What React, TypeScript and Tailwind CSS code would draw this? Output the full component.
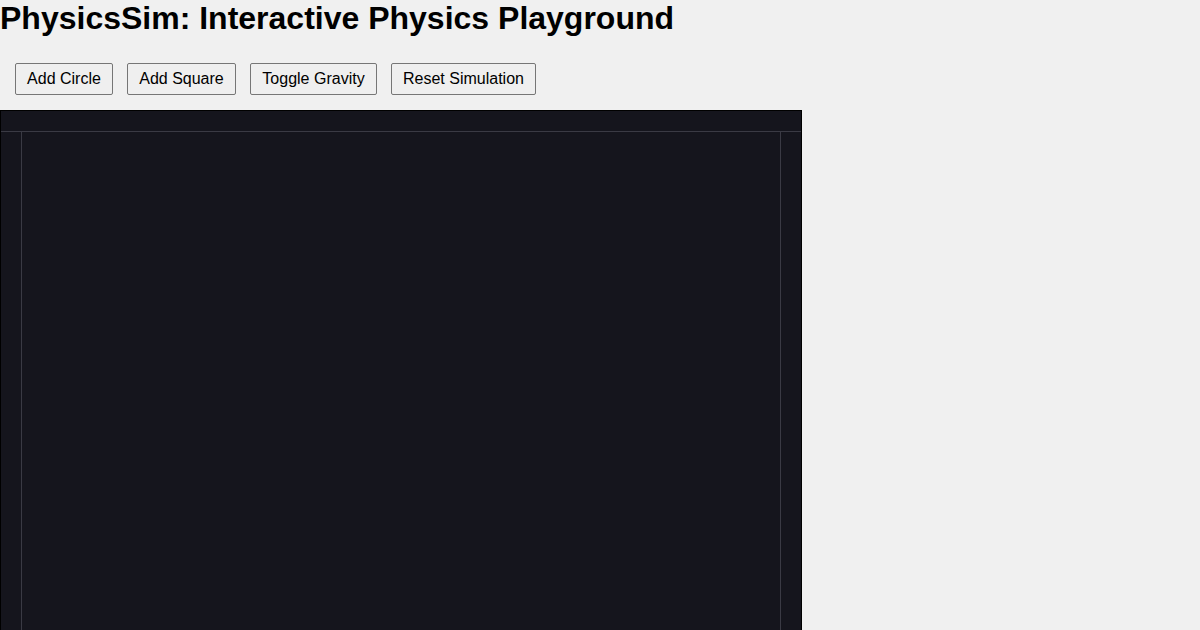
import React from "react";

export default function App() {
  return (
    <div className="min-h-screen bg-[#f0f0f0] text-black" style={{ fontFamily: '"Liberation Sans", Arial, sans-serif' }}>
      <h1 className="m-0 text-[32px] leading-[37px] font-bold">PhysicsSim: Interactive Physics Playground</h1>
      <div className="flex gap-[14px] px-[15px] pt-[26px] pb-[15px]">
        <button className="w-[98px] h-[32px] text-[16px] leading-[18px] bg-[#efefef] border border-[#767676] rounded-[2px] text-black">Add Circle</button>
        <button className="w-[109px] h-[32px] text-[16px] leading-[18px] bg-[#efefef] border border-[#767676] rounded-[2px] text-black">Add Square</button>
        <button className="w-[127px] h-[32px] text-[16px] leading-[18px] bg-[#efefef] border border-[#767676] rounded-[2px] text-black">Toggle Gravity</button>
        <button className="w-[145px] h-[32px] text-[16px] leading-[18px] bg-[#efefef] border border-[#767676] rounded-[2px] text-black">Reset Simulation</button>
      </div>
      <div className="w-[802px] border border-black bg-[#15151d]">
        <svg width="800" height="600" viewBox="0 0 800 600" className="block">
          <rect x="0" y="0" width="800" height="600" fill="#15151d" />
          <line x1="0" y1="20.5" x2="800" y2="20.5" stroke="#3a3a44" strokeWidth="1" />
          <line x1="20.5" y1="20" x2="20.5" y2="600" stroke="#3a3a44" strokeWidth="1" />
          <line x1="779.5" y1="20" x2="779.5" y2="600" stroke="#3a3a44" strokeWidth="1" />
        </svg>
      </div>
    </div>
  );
}
